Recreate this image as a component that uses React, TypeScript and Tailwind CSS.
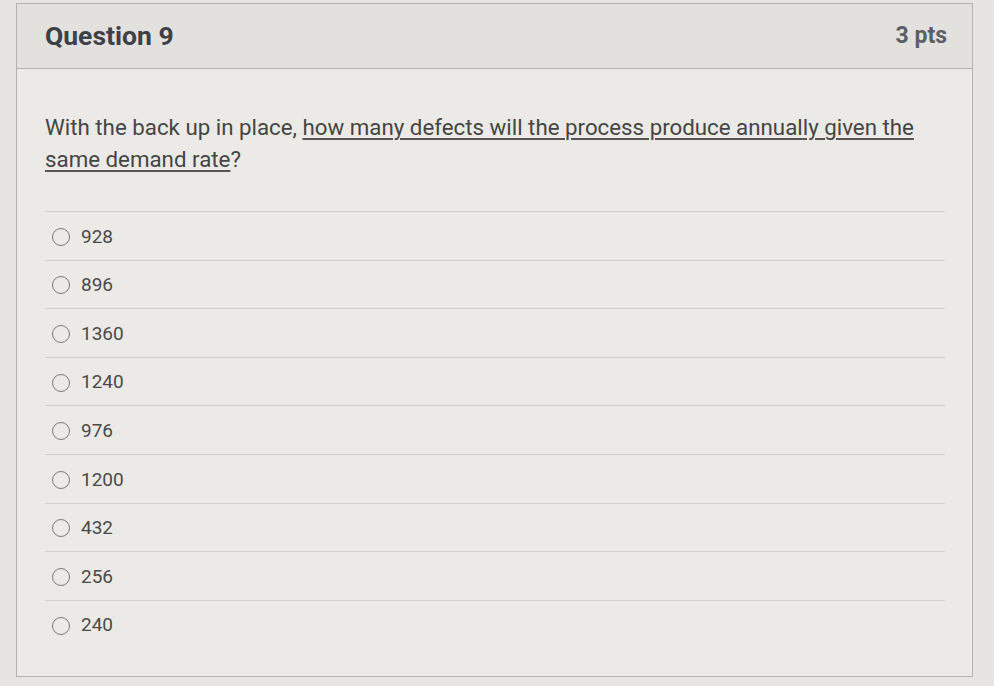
const options = ["928", "896", "1360", "1240", "976", "1200", "432", "256", "240"];

export default function App() {
  return (
    <div className="h-[686px] w-[994px] overflow-hidden bg-[#e6e5e1] pl-[16px] pr-[21px] pt-[3px] font-['Roboto',sans-serif]">
      <div className="border border-[#b3b3ae] bg-[#ebeae6]">
        {/* Header */}
        <div className="flex h-[65px] items-center justify-between border-b border-[#b3b3ae] bg-[#e2e1dd] pl-[28px] pr-[25px]">
          <h2 className="text-[26.5px] font-bold text-[#3d4047]">Question 9</h2>
          <span className="text-[23px] font-bold text-[#5c5e66]">3 pts</span>
        </div>

        {/* Body */}
        <div className="pb-[28px] pl-[28px] pr-[27px] pt-[42px]">
          <p className="text-[22.3px] leading-[32px] text-[#454545]">
            With the back up in place,{" "}
            <span className="underline decoration-[#555] decoration-[1.5px] underline-offset-[3px]">
              how many defects will the process produce annually given the same demand rate
            </span>
            ?
          </p>

          <div className="mt-[36px]">
            {options.map((opt) => (
              <label
                key={opt}
                className="flex h-[48.6px] items-center border-t border-[#cfcfca] pl-[7px] pt-[2px]"
              >
                <span className="h-[18px] w-[18px] shrink-0 rounded-full border-[1.5px] border-[#7a7a7a]" />
                <span className="ml-[11px] text-[19px] text-[#4a4a4a]">{opt}</span>
              </label>
            ))}
          </div>
        </div>
      </div>
    </div>
  );
}
